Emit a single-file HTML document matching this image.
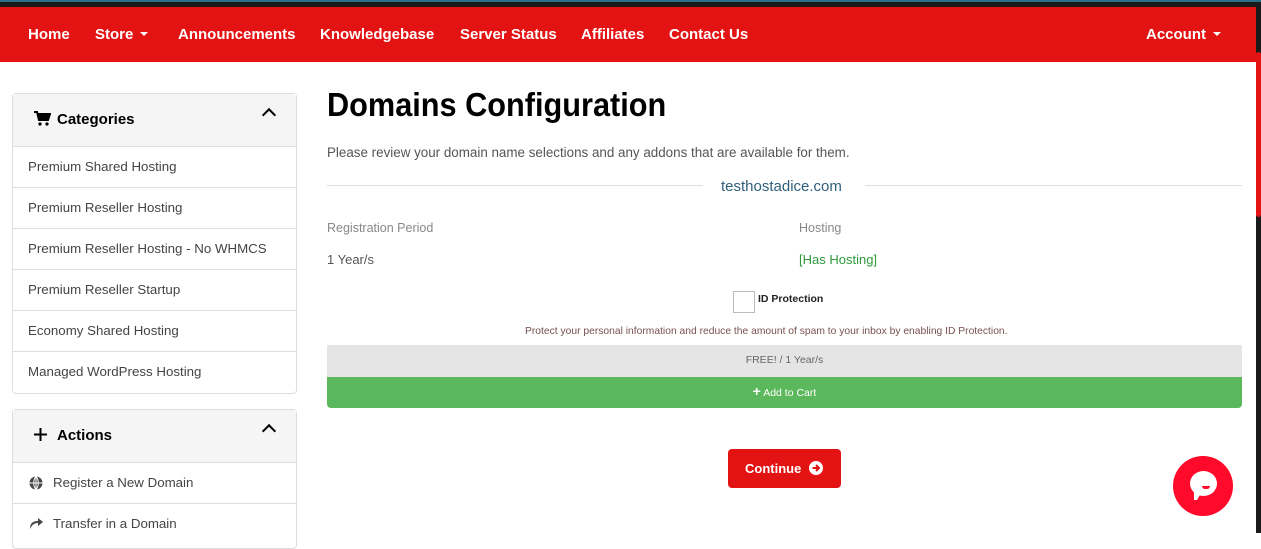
<!DOCTYPE html>
<html><head><style>
*{box-sizing:border-box;margin:0;padding:0}
body{width:1261px;height:533px;overflow:hidden;background:#fff;font-family:"Liberation Sans",sans-serif;position:relative}
.top{position:absolute;left:0;top:0;width:1261px;height:7px;background:#1a1a1a;border-top:2px solid #2a6f86}
.nav{position:absolute;left:0;top:7px;width:1256px;height:55px;background:#e41313}
.nav span{position:absolute;top:19px;color:#fff;font-weight:bold;font-size:15px}
.car{display:inline-block;border-left:4px solid transparent;border-right:4px solid transparent;border-top:4px solid #fff;vertical-align:middle;margin-left:7px;margin-top:-3px}
.sb{position:absolute;right:0;top:7px;width:5px;height:526px;background:#1a1a1a}
.sb i{position:absolute;left:0;top:45px;width:5px;height:165px;background:#e41313;border-radius:3px}
.panel{position:absolute;left:12px;width:285px;border:1px solid #ddd;border-radius:4px;background:#fff}
.ph{height:53px;background:#f5f5f5;border-bottom:1px solid #ddd;position:relative;font-weight:bold;font-size:15px;padding:17px 0 0 44px;color:#000}
.ph .chev{position:absolute;right:22px;top:16px;width:10px;height:10px;border-left:2px solid #000;border-top:2px solid #000;transform:rotate(45deg)}
.it{height:41px;border-bottom:1px solid #ddd;font-size:13.3px;color:#444;padding:12px 0 0 15px}
.it:last-child{border-bottom:none}
h1{position:absolute;left:327px;top:86px;font-size:33px;font-weight:bold;color:#000;transform:scaleX(0.93);transform-origin:left}
.t{position:absolute;font-size:12.5px;color:#555}
</style></head><body>
<div class="top"></div>
<div class="nav">
<span style="left:28px">Home</span>
<span style="left:95px">Store<i class="car"></i></span>
<span style="left:178px">Announcements</span>
<span style="left:320px">Knowledgebase</span>
<span style="left:460px">Server Status</span>
<span style="left:581px">Affiliates</span>
<span style="left:669px">Contact Us</span>
<span style="left:1146px">Account<i class="car"></i></span>
</div>
<div class="sb"><i></i></div>

<div class="panel" style="top:93px">
<div class="ph"><svg style="position:absolute;left:21px;top:17px" width="17" height="15" viewBox="0 0 17 15"><path d="M0 1h3l2 8h9l2-6H4" fill="none" stroke="#000" stroke-width="2"/><path d="M4 3h12l-2 6H5z" fill="#000"/><circle cx="6" cy="13" r="1.6"/><circle cx="13" cy="13" r="1.6"/></svg>Categories<i class="chev"></i></div>
<div class="it">Premium Shared Hosting</div>
<div class="it">Premium Reseller Hosting</div>
<div class="it">Premium Reseller Hosting - No WHMCS</div>
<div class="it">Premium Reseller Startup</div>
<div class="it">Economy Shared Hosting</div>
<div class="it">Managed WordPress Hosting</div>
</div>

<div class="panel" style="top:409px;height:140px">
<div class="ph"><svg style="position:absolute;left:21px;top:18px" width="13" height="13"><path d="M6.5 0v13M0 6.5h13" stroke="#000" stroke-width="2"/></svg>Actions<i class="chev"></i></div>
<div class="it" style="padding-left:40px;position:relative"><svg style="position:absolute;left:16px;top:13px" width="14" height="14" viewBox="0 0 14 14"><circle cx="7" cy="7" r="6.5" fill="#444"/><path d="M7 .5v13M.5 7h13M7 .5c-3 3-3 10 0 13M7 .5c3 3 3 10 0 13" stroke="#fff" stroke-width="1" fill="none"/></svg>Register a New Domain</div>
<div class="it" style="padding-left:40px;position:relative"><svg style="position:absolute;left:16px;top:13px" width="14" height="12" viewBox="0 0 14 12"><path d="M1 12C1 6 4 4 9 4V1l5 4-5 4V6C5 6 3 8 1 12z" fill="#444"/></svg>Transfer in a Domain</div>
</div>

<h1>Domains Configuration</h1>
<div class="t" style="left:327px;top:145px;font-size:13.4px">Please review your domain name selections and any addons that are available for them.</div>
<div style="position:absolute;left:327px;top:185px;width:376px;height:1px;background:#ddd"></div>
<div style="position:absolute;left:865px;top:185px;width:377px;height:1px;background:#ddd"></div>
<div class="t" style="left:721px;top:178px;font-size:15px;color:#2f5f7a">testhostadice.com</div>
<div class="t" style="left:327px;top:221px;color:#888">Registration Period</div>
<div class="t" style="left:799px;top:221px;color:#888">Hosting</div>
<div class="t" style="left:327px;top:252px;font-size:13px">1 Year/s</div>
<div class="t" style="left:799px;top:252px;font-size:13px;color:#2e9a3d">[Has Hosting]</div>
<div style="position:absolute;left:733px;top:291px;width:22px;height:22px;border:1px solid #bbb"></div>
<div class="t" style="left:758px;top:293px;font-size:10.5px;font-weight:bold;color:#222">ID Protection</div>
<div class="t" style="left:525px;top:326px;font-size:10.3px;color:#7a5050;width:540px">Protect your personal information and reduce the amount of spam to your inbox by enabling ID Protection.</div>
<div style="position:absolute;left:327px;top:345px;width:915px;height:32px;background:#e5e5e5;text-align:center;font-size:10.5px;color:#666;padding-top:9px">FREE! / 1 Year/s</div>
<div style="position:absolute;left:327px;top:377px;width:915px;height:31px;background:#5cb85c;border-radius:0 0 4px 4px;text-align:center;font-size:10.5px;color:#fff;padding-top:9px"><b style="font-size:14px;line-height:10px">+</b> Add to Cart</div>
<div style="position:absolute;left:728px;top:449px;width:113px;height:39px;background:#e41313;border-radius:4px;color:#fff;font-weight:bold;font-size:13px;padding:12px 0 0 17px">Continue <svg style="position:absolute;left:81px;top:12px" width="14" height="14" viewBox="0 0 14 14"><circle cx="7" cy="7" r="7" fill="#fff"/><path d="M3.5 7h6M7 4l3 3-3 3" stroke="#e41313" stroke-width="2" fill="none"/></svg></div>
<div style="position:absolute;left:1173px;top:456px;width:60px;height:60px;border-radius:50%;background:#ff0a2a"><div style="position:absolute;left:17px;top:15px;width:27px;height:25px;border-radius:50%;background:#fff"></div><div style="position:absolute;left:21px;top:34px;width:0;height:0;border-left:3px solid #fff;border-right:6px solid transparent;border-top:10px solid #fff"></div><div style="position:absolute;left:29px;top:30px;width:8px;height:3px;border-radius:0 0 4px 4px;background:#ff0a2a"></div></div>
</body></html>
